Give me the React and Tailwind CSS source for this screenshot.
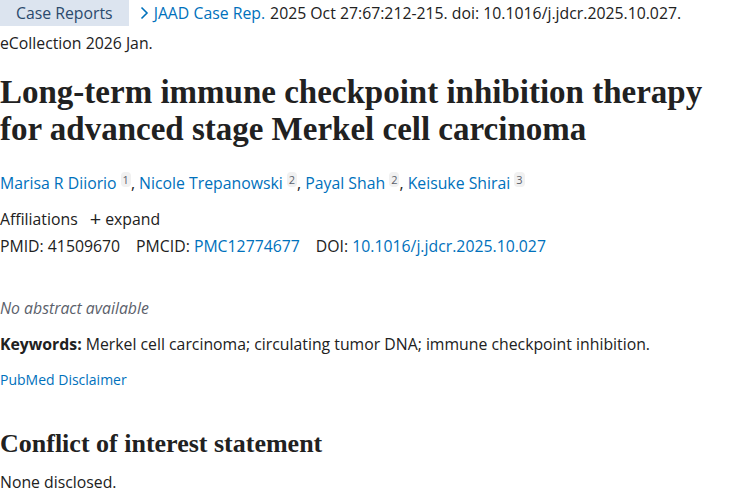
import React from 'react';

const authors = [
  { name: 'Marisa R Diiorio', aff: '1' },
  { name: 'Nicole Trepanowski', aff: '2' },
  { name: 'Payal Shah', aff: '2' },
  { name: 'Keisuke Shirai', aff: '3' },
];

const serif = { fontFamily: '"Liberation Serif", "DejaVu Serif", serif' };

function Sup({ children }) {
  return (
    <sup className="ml-1 rounded-sm bg-[#f1f1f1] px-[2px] text-[11px] text-[#5b616b]">{children}</sup>
  );
}

export default function App() {
  return (
    <div
      className="h-[500px] w-[750px] overflow-hidden bg-white text-[15.8px] text-[#212121]"
      style={{ fontFamily: '"Open Sans", "Noto Sans", sans-serif' }}
    >
      <div className="flex items-center leading-[26px]">
        <span className="mr-[10px] inline-block bg-[#dce4ef] px-4 text-[#2b4a6d]">Case Reports</span>
        <svg className="mr-[5px] h-[14px] w-[10px] text-[#0071bc]" viewBox="0 0 10 14" fill="none" stroke="currentColor" strokeWidth="1.6">
          <path d="M2.5 1.5 L8 7 L2.5 12.5" />
        </svg>
        <span className="text-[#0071bc]">JAAD Case Rep.</span>
        <span className="ml-[5px] text-[#212121]">2025 Oct 27:67:212-215. doi: 10.1016/j.jdcr.2025.10.027.</span>
      </div>
      <div className="mt-[4px] leading-[26px]">eCollection 2026 Jan.</div>

      <h1 className="mt-[18px] text-[33px] font-bold leading-[37px] text-[#212121]" style={serif}>
        Long-term immune checkpoint inhibition therapy
        <br />
        for advanced stage Merkel cell carcinoma
      </h1>

      <div className="mt-[22px] leading-[26px]">
        {authors.map((a, i) => (
          <span key={a.name}>
            <a className="text-[#0071bc]">{a.name}</a>
            <Sup>{a.aff}</Sup>
            {i < authors.length - 1 && ', '}
          </span>
        ))}
      </div>

      <div className="mt-[10px] flex items-center leading-[26px]">
        <span>Affiliations</span>
        <span className="ml-3 text-[20px] leading-none">+</span>
        <span className="ml-1">expand</span>
      </div>
      <div className="mt-[1px] flex gap-4 leading-[26px]">
        <span>PMID: 41509670</span>
        <span>
          PMCID: <a className="text-[#0071bc]">PMC12774677</a>
        </span>
        <span>
          DOI: <a className="text-[#0071bc]">10.1016/j.jdcr.2025.10.027</a>
        </span>
      </div>

      <div className="mt-[36px] italic leading-[26px] text-[#5b616b]">No abstract available</div>

      <div className="mt-[10px] leading-[26px]">
        <strong className="font-bold">Keywords:</strong> Merkel cell carcinoma; circulating tumor DNA; immune checkpoint inhibition.
      </div>

      <div className="mt-[10px] text-[14px] leading-[26px] text-[#0071bc]">PubMed Disclaimer</div>

      <h2 className="mt-[36px] text-[26px] font-bold leading-[30px]" style={serif}>
        Conflict of interest statement
      </h2>
      <div className="mt-[10px] leading-[26px]">None disclosed.</div>
    </div>
  );
}
